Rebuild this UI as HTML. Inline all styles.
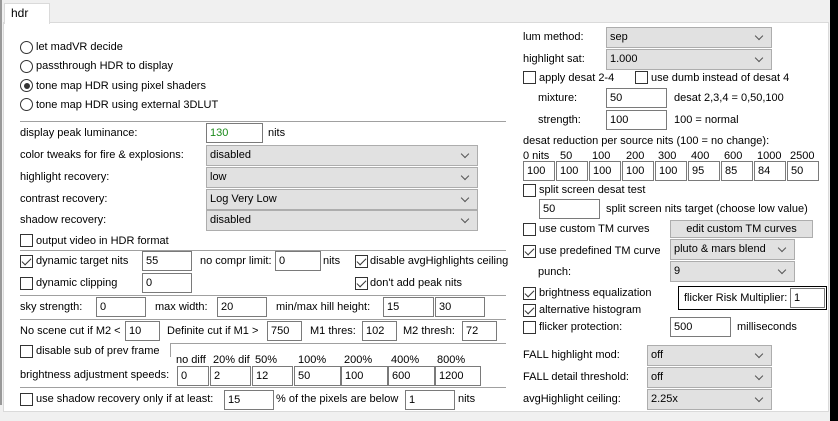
<!DOCTYPE html>
<html><head><meta charset="utf-8"><style>
*{margin:0;padding:0;box-sizing:border-box}
body{width:838px;height:421px;background:#f0f0f0;position:relative;overflow:hidden;font-family:"Liberation Sans",Arial,sans-serif;font-size:11px;color:#000}
.a{position:absolute;white-space:nowrap}
.t{position:absolute;white-space:nowrap;line-height:16px;height:16px}
.in{position:absolute;background:#fff;border:1px solid #7a7a7a;height:20px;line-height:18px;padding-left:3px}
.cb{position:absolute;background:#e1e1e1;border:1px solid #adadad;height:21px;line-height:19px;padding-left:3px}
.cb:after{content:"";position:absolute;right:9px;top:5px;width:5px;height:5px;border-right:1px solid #555;border-bottom:1px solid #555;transform:rotate(45deg)}
.ck{position:absolute;width:13px;height:13px;border:1px solid #333;background:#fff}
.ck.on:after{content:"";position:absolute;left:3px;top:0px;width:4px;height:8px;border-right:1.3px solid #333;border-bottom:1.3px solid #333;transform:rotate(45deg)}
.rd{position:absolute;width:13px;height:13px;border:1px solid #333;border-radius:50%;background:#fff}
.rd.on:after{content:"";position:absolute;left:2.5px;top:2.5px;width:6px;height:6px;border-radius:50%;background:#333}
.hl{position:absolute;height:1px;background:#a0a0a0}
</style></head><body>
<div class="a" style="left:3px;top:22px;width:826px;height:390px;background:#fff;border:1px solid #dadada"></div>
<div class="a" style="left:4px;top:3px;width:46px;height:21px;background:#fff;border:1px solid #dadada;border-bottom:none"></div>
<div class="t" style="left:11px;top:5px;font-size:12px">hdr</div>
<div class="a" style="left:830px;top:0;width:8px;height:421px;background:#000"></div>
<div class="a" style="left:0;top:0;width:2px;height:405px;background:#999"></div>

<div class="rd" style="left:20px;top:41px"></div><div class="t" style="left:36px;top:39px">let madVR decide</div>
<div class="rd" style="left:20px;top:60px"></div><div class="t" style="left:36px;top:58px">passthrough HDR to display</div>
<div class="rd on" style="left:20px;top:79px"></div><div class="t" style="left:36px;top:78px">tone map HDR using pixel shaders</div>
<div class="rd" style="left:20px;top:98px"></div><div class="t" style="left:36px;top:97px">tone map HDR using external 3DLUT</div>
<div class="hl" style="left:20px;top:121px;width:486px"></div>

<div class="t" style="left:20px;top:125px">display peak luminance:</div>
<div class="in" style="left:206px;top:123px;width:57px;color:#1a8a1a">130</div>
<div class="t" style="left:268px;top:125px">nits</div>
<div class="t" style="left:20px;top:147px">color tweaks for fire &amp; explosions:</div>
<div class="cb" style="left:206px;top:145px;width:272px">disabled</div>
<div class="t" style="left:20px;top:169px">highlight recovery:</div>
<div class="cb" style="left:206px;top:167px;width:272px">low</div>
<div class="t" style="left:20px;top:191px">contrast recovery:</div>
<div class="cb" style="left:206px;top:189px;width:272px">Log Very Low</div>
<div class="t" style="left:20px;top:212px">shadow recovery:</div>
<div class="cb" style="left:206px;top:210px;width:272px">disabled</div>
<div class="ck" style="left:20px;top:234px"></div><div class="t" style="left:36px;top:233px">output video in HDR format</div>
<div class="hl" style="left:20px;top:250px;width:486px"></div>

<div class="ck on" style="left:20px;top:255px"></div><div class="t" style="left:36px;top:253px">dynamic target nits</div>
<div class="in" style="left:142px;top:251px;width:50px">55</div>
<div class="t" style="left:200px;top:253px">no compr limit:</div>
<div class="in" style="left:275px;top:251px;width:46px">0</div>
<div class="t" style="left:323px;top:253px">nits</div>
<div class="ck on" style="left:355px;top:255px"></div><div class="t" style="left:370px;top:253px">disable avgHighlights ceiling</div>
<div class="ck" style="left:20px;top:277px"></div><div class="t" style="left:36px;top:275px">dynamic clipping</div>
<div class="in" style="left:142px;top:273px;width:50px">0</div>
<div class="ck on" style="left:355px;top:277px"></div><div class="t" style="left:370px;top:275px">don't add peak nits</div>
<div class="hl" style="left:20px;top:295px;width:486px"></div>

<div class="t" style="left:20px;top:299px">sky strength:</div>
<div class="in" style="left:96px;top:297px;width:50px">0</div>
<div class="t" style="left:155px;top:299px">max width:</div>
<div class="in" style="left:217px;top:297px;width:50px">20</div>
<div class="t" style="left:276px;top:299px">min/max hill height:</div>
<div class="in" style="left:383px;top:297px;width:51px">15</div>
<div class="in" style="left:435px;top:297px;width:50px">30</div>
<div class="hl" style="left:20px;top:319px;width:486px"></div>

<div class="t" style="left:20px;top:323px">No scene cut if M2 &lt;</div>
<div class="in" style="left:125px;top:321px;width:35px">10</div>
<div class="t" style="left:167px;top:323px">Definite cut if M1 &gt;</div>
<div class="in" style="left:267px;top:321px;width:35px">750</div>
<div class="t" style="left:310px;top:323px">M1 thres:</div>
<div class="in" style="left:362px;top:321px;width:35px">102</div>
<div class="t" style="left:403px;top:323px">M2 thresh:</div>
<div class="in" style="left:462px;top:321px;width:35px">72</div>
<div class="hl" style="left:170px;top:343px;width:336px"></div>
<div class="a" style="left:170px;top:343px;width:1px;height:14px;background:#a0a0a0"></div>
<div class="ck" style="left:20px;top:345px"></div><div class="t" style="left:36px;top:343px">disable sub of prev frame</div>

<div class="t" style="left:176px;top:352px">no diff</div>
<div class="t" style="left:213px;top:352px">20% dif</div>
<div class="t" style="left:255px;top:352px">50%</div>
<div class="t" style="left:298px;top:352px">100%</div>
<div class="t" style="left:344px;top:352px">200%</div>
<div class="t" style="left:391px;top:352px">400%</div>
<div class="t" style="left:437px;top:352px">800%</div>
<div class="t" style="left:20px;top:367px">brightness adjustment speeds:</div>
<div class="in" style="left:177px;top:366px;width:32px">0</div>
<div class="in" style="left:210px;top:366px;width:41px">2</div>
<div class="in" style="left:252px;top:366px;width:41px">12</div>
<div class="in" style="left:294px;top:366px;width:47px">50</div>
<div class="in" style="left:341px;top:366px;width:47px">100</div>
<div class="in" style="left:388px;top:366px;width:47px">600</div>
<div class="in" style="left:435px;top:366px;width:46px">1200</div>
<div class="hl" style="left:20px;top:387px;width:486px"></div>

<div class="ck" style="left:20px;top:393px"></div><div class="t" style="left:36px;top:391px">use shadow recovery only if at least:</div>
<div class="in" style="left:224px;top:390px;width:50px">15</div>
<div class="t" style="left:276px;top:391px">% of the pixels are below</div>
<div class="in" style="left:405px;top:390px;width:50px">1</div>
<div class="t" style="left:458px;top:391px">nits</div>

<div class="t" style="left:523px;top:29px">lum method:</div>
<div class="cb" style="left:606px;top:27px;width:166px">sep</div>
<div class="t" style="left:523px;top:51px">highlight sat:</div>
<div class="cb" style="left:606px;top:49px;width:166px">1.000</div>
<div class="ck" style="left:523px;top:71px"></div><div class="t" style="left:539px;top:70px">apply desat 2-4</div>
<div class="ck" style="left:635px;top:71px"></div><div class="t" style="left:651px;top:70px">use dumb instead of desat 4</div>
<div class="t" style="left:538px;top:90px">mixture:</div>
<div class="in" style="left:606px;top:88px;width:61px">50</div>
<div class="t" style="left:674px;top:90px">desat 2,3,4 = 0,50,100</div>
<div class="t" style="left:538px;top:112px">strength:</div>
<div class="in" style="left:606px;top:110px;width:61px">100</div>
<div class="t" style="left:674px;top:112px">100 = normal</div>
<div class="t" style="left:523px;top:133px">desat reduction per source nits (100 = no change):</div>
<div class="t" style="left:523px;top:148px">0 nits</div>
<div class="t" style="left:560px;top:148px">50</div>
<div class="t" style="left:592px;top:148px">100</div>
<div class="t" style="left:626px;top:148px">200</div>
<div class="t" style="left:658px;top:148px">300</div>
<div class="t" style="left:691px;top:148px">400</div>
<div class="t" style="left:724px;top:148px">600</div>
<div class="t" style="left:757px;top:148px">1000</div>
<div class="t" style="left:790px;top:148px">2500</div>
<div class="in" style="left:523px;top:161px;width:32px">100</div>
<div class="in" style="left:556px;top:161px;width:32px">100</div>
<div class="in" style="left:589px;top:161px;width:32px">100</div>
<div class="in" style="left:622px;top:161px;width:32px">100</div>
<div class="in" style="left:655px;top:161px;width:32px">100</div>
<div class="in" style="left:688px;top:161px;width:32px">95</div>
<div class="in" style="left:721px;top:161px;width:32px">85</div>
<div class="in" style="left:754px;top:161px;width:32px">84</div>
<div class="in" style="left:787px;top:161px;width:32px">50</div>
<div class="ck" style="left:523px;top:184px"></div><div class="t" style="left:539px;top:182px">split screen desat test</div>
<div class="in" style="left:539px;top:199px;width:61px">50</div>
<div class="t" style="left:606px;top:201px">split screen nits target (choose low value)</div>
<div class="ck" style="left:523px;top:223px"></div><div class="t" style="left:539px;top:221px">use custom TM curves</div>
<div class="a" style="left:670px;top:220px;width:143px;height:18px;background:#e1e1e1;border:1px solid #adadad;text-align:center;line-height:16px">edit custom TM curves</div>
<div class="ck on" style="left:523px;top:245px"></div><div class="t" style="left:539px;top:243px">use predefined TM curve</div>
<div class="cb" style="left:670px;top:239px;width:125px">pluto &amp; mars blend</div>
<div class="t" style="left:538px;top:264px">punch:</div>
<div class="cb" style="left:670px;top:261px;width:125px">9</div>
<div class="ck on" style="left:523px;top:287px"></div><div class="t" style="left:539px;top:285px">brightness equalization</div>
<div class="ck on" style="left:523px;top:304px"></div><div class="t" style="left:539px;top:302px">alternative histogram</div>
<div class="ck" style="left:523px;top:321px"></div><div class="t" style="left:539px;top:319px">flicker protection:</div>
<div class="a" style="left:678px;top:286px;width:149px;height:24px;border:1px solid #000;background:#fff"></div>
<div class="t" style="left:684px;top:290px">flicker Risk Multiplier:</div>
<div class="in" style="left:790px;top:288px;width:35px">1</div>
<div class="in" style="left:670px;top:317px;width:61px">500</div>
<div class="t" style="left:737px;top:319px">milliseconds</div>
<div class="t" style="left:523px;top:347px">FALL highlight mod:</div>
<div class="cb" style="left:647px;top:345px;width:125px">off</div>
<div class="t" style="left:523px;top:369px">FALL detail threshold:</div>
<div class="cb" style="left:647px;top:367px;width:125px">off</div>
<div class="t" style="left:523px;top:391px">avgHighlight ceiling:</div>
<div class="cb" style="left:647px;top:389px;width:125px">2.25x</div>
</body></html>
